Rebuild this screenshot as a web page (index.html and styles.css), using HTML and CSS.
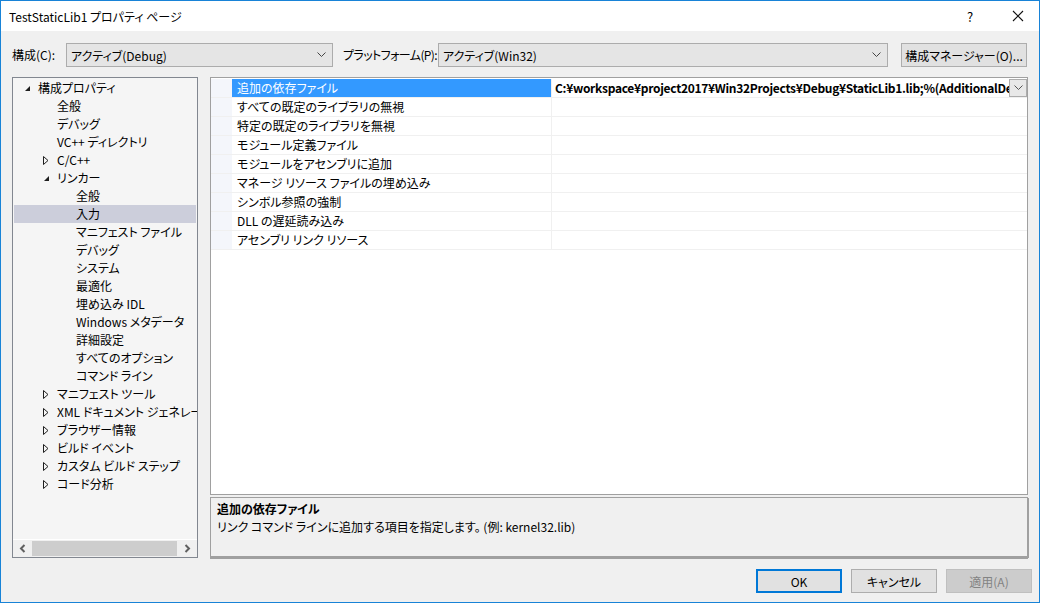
FILE: index.html
```html
<!DOCTYPE html>
<html lang="ja">
<head>
    <meta charset="UTF-8">
    <title>TestStaticLib1 プロパティ ページ</title>
    <link rel="stylesheet" href="styles.css">
</head>
<body>

<div class="window">
    <div class="titlebar">
        <span class="title">TestStaticLib1 プロパティ ページ</span>
        <span class="help">?</span>
        <span class="close">
            <svg width="12" height="12" viewBox="0 0 12 12"><path d="M1 1l10 10M11 1L1 11" stroke="#111" stroke-width="1.1"/></svg>
        </span>
    </div>

    <div class="toolbar">
        <label class="lbl lbl-config">構成(C):</label>
        <div class="combo combo-config">
            <span>アクティブ(Debug)</span>
            <svg class="chev" width="9" height="6" viewBox="0 0 9 6"><path d="M.5.5l4 4 4-4" fill="none" stroke="#444"/></svg>
        </div>
        <label class="lbl lbl-platform">プラットフォーム(P):</label>
        <div class="combo combo-platform">
            <span>アクティブ(Win32)</span>
            <svg class="chev" width="9" height="6" viewBox="0 0 9 6"><path d="M.5.5l4 4 4-4" fill="none" stroke="#444"/></svg>
        </div>
        <button class="btn btn-manager">構成マネージャー(O)...</button>
    </div>

    <div class="main">
        <!-- left: property page tree -->
        <div class="tree">
            <ul class="tree-list">
                <li class="lv0"><span class="twisty"><svg width="7" height="7" viewBox="0 0 7 7"><path d="M6 1v5H1z" fill="#1e1e1e"/></svg></span>構成プロパティ</li>
                <li class="lv1"><span class="twisty"></span>全般</li>
                <li class="lv1"><span class="twisty"></span>デバッグ</li>
                <li class="lv1"><span class="twisty"></span>VC++ ディレクトリ</li>
                <li class="lv1"><span class="twisty"><svg width="6" height="9" viewBox="0 0 6 9"><path d="M.5.5l4.5 4-4.5 4z" fill="none" stroke="#1e1e1e"/></svg></span>C/C++</li>
                <li class="lv1"><span class="twisty"><svg width="7" height="7" viewBox="0 0 7 7"><path d="M6 1v5H1z" fill="#1e1e1e"/></svg></span>リンカー</li>
                <li class="lv2"><span class="twisty"></span>全般</li>
                <li class="lv2 selected"><span class="twisty"></span>入力</li>
                <li class="lv2"><span class="twisty"></span>マニフェスト ファイル</li>
                <li class="lv2"><span class="twisty"></span>デバッグ</li>
                <li class="lv2"><span class="twisty"></span>システム</li>
                <li class="lv2"><span class="twisty"></span>最適化</li>
                <li class="lv2"><span class="twisty"></span>埋め込み IDL</li>
                <li class="lv2"><span class="twisty"></span>Windows メタデータ</li>
                <li class="lv2"><span class="twisty"></span>詳細設定</li>
                <li class="lv2"><span class="twisty"></span>すべてのオプション</li>
                <li class="lv2"><span class="twisty"></span>コマンド ライン</li>
                <li class="lv1"><span class="twisty"><svg width="6" height="9" viewBox="0 0 6 9"><path d="M.5.5l4.5 4-4.5 4z" fill="none" stroke="#1e1e1e"/></svg></span>マニフェスト ツール</li>
                <li class="lv1"><span class="twisty"><svg width="6" height="9" viewBox="0 0 6 9"><path d="M.5.5l4.5 4-4.5 4z" fill="none" stroke="#1e1e1e"/></svg></span>XML ドキュメント ジェネレーター</li>
                <li class="lv1"><span class="twisty"><svg width="6" height="9" viewBox="0 0 6 9"><path d="M.5.5l4.5 4-4.5 4z" fill="none" stroke="#1e1e1e"/></svg></span>ブラウザー情報</li>
                <li class="lv1"><span class="twisty"><svg width="6" height="9" viewBox="0 0 6 9"><path d="M.5.5l4.5 4-4.5 4z" fill="none" stroke="#1e1e1e"/></svg></span>ビルド イベント</li>
                <li class="lv1"><span class="twisty"><svg width="6" height="9" viewBox="0 0 6 9"><path d="M.5.5l4.5 4-4.5 4z" fill="none" stroke="#1e1e1e"/></svg></span>カスタム ビルド ステップ</li>
                <li class="lv1"><span class="twisty"><svg width="6" height="9" viewBox="0 0 6 9"><path d="M.5.5l4.5 4-4.5 4z" fill="none" stroke="#1e1e1e"/></svg></span>コード分析</li>
            </ul>
            <div class="hscroll">
                <svg class="arrow" width="7" height="9" viewBox="0 0 7 9"><path d="M5.5 1L2 4.5 5.5 8" fill="none" stroke="#606060" stroke-width="2"/></svg>
                <div class="thumb-track"><div class="thumb"></div></div>
                <svg class="arrow" width="7" height="9" viewBox="0 0 7 9"><path d="M1.5 1L5 4.5 1.5 8" fill="none" stroke="#606060" stroke-width="2"/></svg>
            </div>
        </div>

        <!-- right: property grid and description -->
        <div class="right">
            <div class="grid">
                <div class="row selected">
                    <div class="gutter"></div>
                    <div class="name">追加の依存ファイル</div>
                    <div class="value bold">
                        <span class="value-text">C:¥workspace¥project2017¥Win32Projects¥Debug¥StaticLib1.lib;%(AdditionalDependencies)</span>
                        <span class="drop">
                            <svg width="9" height="6" viewBox="0 0 9 6"><path d="M.5.5l4 4 4-4" fill="none" stroke="#555"/></svg>
                        </span>
                    </div>
                </div>
                <div class="row"><div class="gutter"></div><div class="name">すべての既定のライブラリの無視</div><div class="value"></div></div>
                <div class="row"><div class="gutter"></div><div class="name">特定の既定のライブラリを無視</div><div class="value"></div></div>
                <div class="row"><div class="gutter"></div><div class="name">モジュール定義ファイル</div><div class="value"></div></div>
                <div class="row"><div class="gutter"></div><div class="name">モジュールをアセンブリに追加</div><div class="value"></div></div>
                <div class="row"><div class="gutter"></div><div class="name">マネージ リソース ファイルの埋め込み</div><div class="value"></div></div>
                <div class="row"><div class="gutter"></div><div class="name">シンボル参照の強制</div><div class="value"></div></div>
                <div class="row"><div class="gutter"></div><div class="name">DLL の遅延読み込み</div><div class="value"></div></div>
                <div class="row"><div class="gutter"></div><div class="name">アセンブリ リンク リソース</div><div class="value"></div></div>
            </div>
            <div class="desc">
                <div class="desc-title">追加の依存ファイル</div>
                <div class="desc-text">リンク コマンド ラインに追加する項目を指定します。 (例: kernel32.lib)</div>
            </div>
        </div>
    </div>

    <div class="footer">
        <button class="btn btn-ok">OK</button>
        <button class="btn">キャンセル</button>
        <button class="btn btn-disabled">適用(A)</button>
    </div>
</div>

</body>
</html>
```

FILE: styles.css
```css
* {
    box-sizing: border-box;
}
body {
    margin: 0;
    font-family: "Noto Sans CJK JP", sans-serif;
    font-size: 12px;
    font-feature-settings: "palt";
    color: #000;
    background: #fff;
}
.window {
    width: 1040px;
    height: 603px;
    border: 1px solid #1883d7;
    background-color: #f0f0f0;
    display: flex;
    flex-direction: column;
    overflow: hidden;
}

/* title bar */
.titlebar {
    height: 30px;
    background: #fff;
    display: flex;
    align-items: center;
    padding-left: 8px;
}
.title {
    flex: 1;
}
.help {
    width: 46px;
    text-align: center;
    font-size: 13px;
}
.close {
    width: 46px;
    display: flex;
    justify-content: center;
    padding-left: 4px;
}

/* configuration bar */
.toolbar {
    display: flex;
    align-items: center;
    padding: 12px 11px 0 11px;
    height: 36px;
}
.lbl {
    line-height: 24px;
    white-space: nowrap;
    flex-shrink: 0;
}
.lbl-config {
    width: 54px;
}
.lbl-platform {
    width: 95px;
    margin-left: 10px;
    letter-spacing: -0.6px;
}
.combo {
    height: 24px;
    flex-shrink: 0;
    background-color: #e5e5e5;
    border: 1px solid #acacac;
    display: flex;
    align-items: center;
    justify-content: space-between;
    padding: 0 6px 0 4px;
}
.combo-config {
    width: 267px;
}
.combo-platform {
    width: 450px;
}
.btn {
    font-family: inherit;
    font-size: 12px;
    font-feature-settings: "palt";
    height: 24px;
    background-color: #e1e1e1;
    border: 1px solid #adadad;
    color: #000;
    padding: 0;
    white-space: nowrap;
}
.btn-manager {
    width: 126px;
    margin-left: 13px;
    flex-shrink: 0;
}

/* main area */
.main {
    display: flex;
    gap: 12px;
    height: 481px;
    margin-top: 10px;
    padding: 0 11px;
}
.tree {
    width: 186px;
    flex-shrink: 0;
    border: 1px solid #828790;
    background-color: #f5f5f5;
    display: flex;
    flex-direction: column;
}
.tree-list {
    list-style: none;
    margin: 0;
    padding: 1px 0 0 0;
    flex: 1;
    overflow: hidden;
}
.tree-list li {
    height: 18px;
    line-height: 18px;
    display: flex;
    align-items: center;
    white-space: nowrap;
    margin: 0 1px;
}
.tree-list .lv0 { padding-left: 9px; }
.tree-list .lv1 { padding-left: 28px; }
.tree-list .lv2 { padding-left: 47px; }
.tree-list li.selected {
    background-color: #cccedb;
}
.twisty {
    width: 15px;
    flex-shrink: 0;
    display: flex;
    align-items: center;
    padding-left: 1px;
}
.hscroll {
    height: 18px;
    border-top: 1px solid #fff;
    display: flex;
    align-items: center;
    background-color: #f0f0f0;
}
.hscroll .arrow {
    margin: 0 6px;
}
.thumb-track {
    flex: 1;
    height: 100%;
}
.thumb {
    width: 145px;
    height: 15px;
    margin-top: 1px;
    background-color: #cdcdcd;
}

.right {
    flex: 1;
    min-width: 0;
    display: flex;
    flex-direction: column;
    gap: 2px;
}
.grid {
    height: 418px;
    border: 1px solid #a0a0a0;
    background-color: #fff;
    padding-top: 1px;
    overflow: hidden;
}
.row {
    display: flex;
    height: 19px;
    border-bottom: 1px solid #f0f0f0;
}
.gutter {
    width: 21px;
    flex-shrink: 0;
    background-color: #f4f6fb;
}
.name {
    width: 320px;
    flex-shrink: 0;
    padding-left: 5px;
    line-height: 18px;
    border-right: 1px solid #f0f0f0;
    white-space: nowrap;
}
.row.selected .name {
    background-color: #3399ff;
    color: #fff;
}
.value {
    flex: 1;
    display: flex;
    min-width: 0;
    line-height: 18px;
    padding-left: 3px;
}
.value.bold {
    font-weight: bold;
    letter-spacing: -0.3px;
}
.value-text {
    flex: 1;
    min-width: 0;
    overflow: hidden;
    white-space: nowrap;
}
.drop {
    width: 18px;
    height: 18px;
    flex-shrink: 0;
    background-color: #e8e8e8;
    border: 1px solid #acacac;
    display: flex;
    align-items: center;
    justify-content: center;
}
.desc {
    height: 60px;
    border: 1px solid #a0a0a0;
    box-shadow: 1px 1px 0 #a0a0a0, 0 2px 0 #a0a0a0;
    padding: 2px 6px;
    line-height: 18px;
}
.desc-title {
    font-weight: bold;
}

/* dialog buttons */
.footer {
    display: flex;
    justify-content: flex-end;
    gap: 9px;
    margin-top: 11px;
    padding-right: 7px;
}
.footer .btn {
    width: 86px;
}
.btn-ok {
    border: 2px solid #0078d7;
}
.btn-disabled {
    background-color: #cccccc;
    border-color: #bfbfbf;
    color: #838383;
}
```
